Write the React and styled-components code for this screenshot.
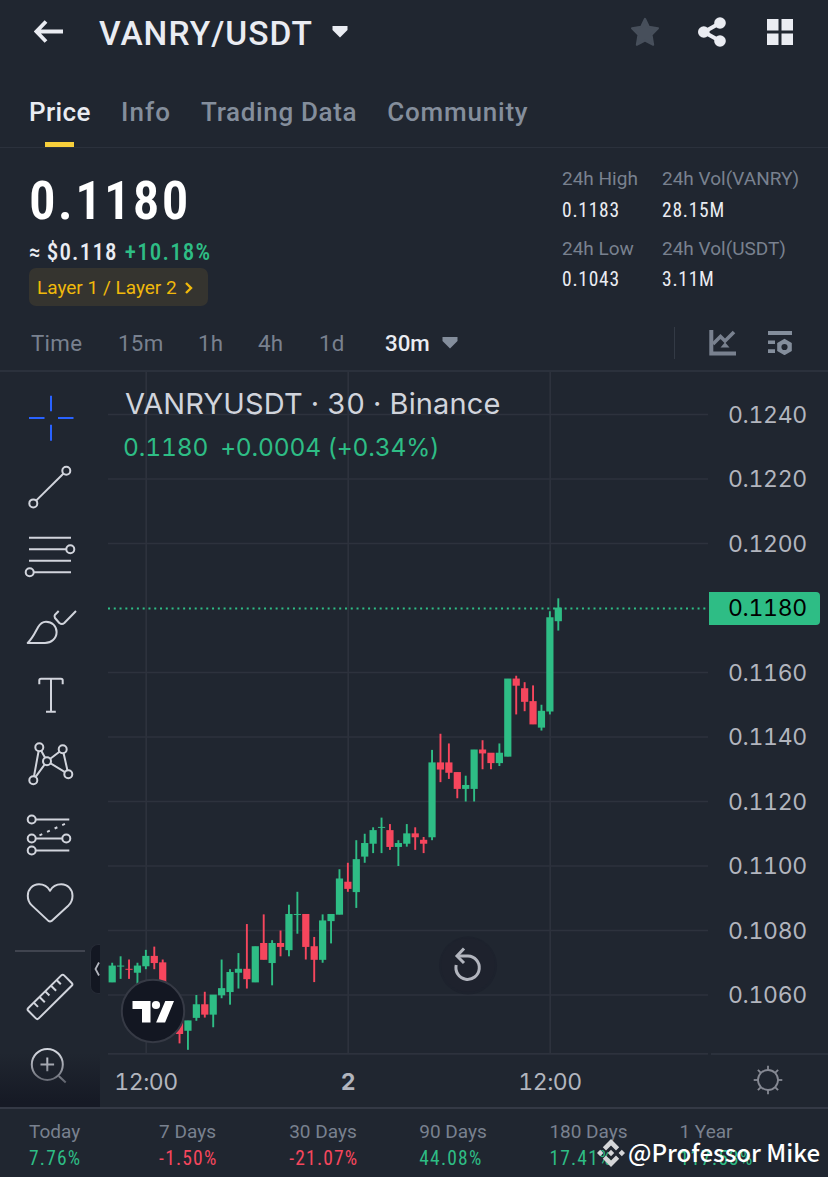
import React from "react";
import styled, { createGlobalStyle } from "styled-components";

const C = {
  bg: "#202630",
  line: "#2b313c",
  text: "#eaecf2",
  muted: "#848e9c",
  dim: "#79818f",
  green: "#2ebd85",
  red: "#f6465d",
  icon: "#d1d4dc",
};

const Global = createGlobalStyle`
  * { box-sizing: border-box; }
  body { margin: 0; background: ${C.bg}; }
`;

const Page = styled.div`
  position: relative;
  width: 828px;
  height: 1177px;
  overflow: hidden;
  display: flex;
  flex-direction: column;
  background: ${C.bg};
  color: ${C.text};
  font-family: Roboto, "Liberation Sans", sans-serif;
  white-space: nowrap;
  svg { display: block; flex: none; }
`;

const Header = styled.header`
  height: 76px;
  padding: 0 35px 12px 34px;
  display: flex;
  align-items: center;
`;
const Pair = styled.h1`
  margin: 3px 19px 0 36px;
  font-size: 33.5px;
  line-height: 40px;
  font-weight: 500;
  letter-spacing: 1px;
`;
const HeaderActions = styled.div`
  margin-left: auto;
  display: flex;
  align-items: center;
  gap: 38px;
  svg:last-child { margin-left: 3px; }
`;

const Tabs = styled.nav`
  height: 72px;
  padding: 0 29px;
  display: flex;
  gap: 30px;
  border-bottom: 1px solid ${C.line};
`;
const Tab = styled.div`
  display: flex;
  flex-direction: column;
  align-items: center;
  justify-content: space-between;
  padding-top: 20px;
  font-size: 26px;
  line-height: 32px;
  font-weight: 500;
  letter-spacing: ${(p) => p.$ls || 0}px;
  color: ${(p) => (p.$active ? C.text : C.muted)};
  &::after {
    content: "";
    width: 29px;
    height: 5px;
    background: ${(p) => (p.$active ? "#f7cf3b" : "transparent")};
  }
`;

const Summary = styled.section`
  height: 167px;
  padding: 0 29px;
  display: flex;
  justify-content: space-between;
`;
const PriceBlock = styled.div`
  display: flex;
  flex-direction: column;
  align-items: flex-start;
  padding-top: 22px;
`;
const Price = styled.div`
  font-size: 53px;
  line-height: 62px;
  font-weight: 600;
  font-stretch: 86%;
  letter-spacing: 2.2px;
  color: #fff;
`;
const Equivalent = styled.div`
  margin-top: 7px;
  font-size: 23px;
  line-height: 28px;
  font-weight: 500;
  font-stretch: 85%;
  letter-spacing: 1.2px;
  word-spacing: -1.5px;
  span { color: ${C.green}; margin-left: 7px; }
`;
const Tag = styled.div`
  margin-top: 1px;
  width: 179px;
  height: 38px;
  padding: 1px 8px 0;
  border-radius: 7px;
  display: flex;
  align-items: center;
  gap: 8px;
  background: #35342f;
  color: #f0b90b;
  font-size: 19px;
`;
const Stats = styled.div`
  width: 237px;
  padding-top: 18px;
  display: grid;
  grid-template-columns: 100px 1fr;
  grid-auto-rows: 69.5px;
`;
const Stat = styled.div`
  font-size: 19px;
  line-height: 26px;
  color: ${C.dim};
  b {
    display: block;
    margin-top: 5.5px;
    font-size: 19.5px;
    font-weight: 400;
    font-stretch: 85%;
    letter-spacing: 0.75px;
    color: ${C.text};
  }
`;

const Intervals = styled.div`
  height: 57px;
  padding: 0 36px 0 31px;
  display: flex;
  align-items: center;
  border-bottom: 2px solid ${C.line};
`;
const Interval = styled.div`
  width: ${(p) => p.$w}px;
  padding-top: 1px;
  font-size: 22.3px;
  line-height: 27px;
  letter-spacing: ${(p) => (p.$active ? 0 : 0.3)}px;
  font-weight: ${(p) => (p.$active ? 500 : 400)};
  color: ${(p) => (p.$active ? C.text : C.dim)};
`;
const IntervalTools = styled.div`
  margin-left: auto;
  display: flex;
  align-items: center;
  gap: 32px;
  padding-left: 34px;
  height: 32px;
  border-left: 1px solid #333a45;
`;

const ChartArea = styled.section`
  height: 735px;
  display: flex;
`;
const Toolbar = styled.aside`
  position: relative;
  width: 100px;
  padding-top: 11.4px;
  display: flex;
  flex-direction: column;
  &::after {
    content: "";
    position: absolute;
    left: 0;
    right: 0;
    bottom: 0;
    height: 54px;
    background: linear-gradient(rgba(19, 23, 34, 0), #161a25 90%);
  }
`;
const ToolDivider = styled.div`
  margin: 11px 15px 10.6px 15px;
  height: 2px;
  background: #40444f;
`;
const CollapseHandle = styled.div`
  position: absolute;
  left: 90px;
  top: 572px;
  width: 10px;
  height: 50px;
  border-radius: 8px 0 0 8px;
  border: 1px solid #262b36;
  border-right: 0;
  background: #131722;
  display: flex;
  align-items: center;
  justify-content: flex-end;
`;
const ChartMain = styled.div`
  width: 728px;
  display: flex;
  flex-direction: column;
`;
const PlotRow = styled.div`
  height: 683px;
  display: flex;
`;
const Plot = styled.div`
  position: relative;
  width: 609px;
  height: 683px;
`;
const Legend = styled.div`
  position: absolute;
  left: 24px;
  top: 13px;
  font-family: Inter, sans-serif;
  font-variant-numeric: tabular-nums;
`;
const LegendTitle = styled.div`
  padding-left: 1px;
  font-size: 29px;
  line-height: 38px;
  color: #d1d4dc;
  letter-spacing: 0.15px;
`;
const LegendValues = styled.div`
  margin-top: 8px;
  margin-left: -1px;
  font-size: 24.5px;
  line-height: 32px;
  letter-spacing: -0.15px;
  color: ${C.green};
  span { margin-left: 12px; }
`;
const PriceScale = styled.div`
  width: 117px;
  margin-left: 2px;
  padding-top: 10.8px;
  border-bottom: 2px solid ${C.line};
  display: flex;
  flex-direction: column;
  font: 23px/33px Inter, sans-serif;
  font-variant-numeric: tabular-nums;
  letter-spacing: -0.3px;
  color: #b2b5be;
`;
const PriceMark = styled.div`
  height: 64.5px;
  margin-left: -2px;
  display: flex;
  align-items: center;
  span {
    width: 111px;
    padding-left: 19px;
    border-radius: 0 4px 4px 0;
    background: ${(p) => (p.$current ? C.green : "transparent")};
    color: ${(p) => (p.$current ? "#000" : "inherit")};
  }
`;
const TimeScale = styled.div`
  flex: 1;
  display: flex;
  align-items: center;
  gap: 126px;
  padding-left: 8px;
  font: 23px/30px Inter, sans-serif;
  font-variant-numeric: tabular-nums;
  letter-spacing: -0.5px;
  color: #b2b5be;
`;
const TimeMark = styled.div`
  width: 76px;
  padding-top: 2px;
  display: flex;
  justify-content: center;
  font-weight: ${(p) => (p.$bold ? 700 : 400)};
`;

const Returns = styled.footer`
  flex: 1;
  padding: 10px 0 0 29px;
  border-top: 2px solid #343945;
  display: grid;
  grid-template-columns: repeat(6, 130.1px);
`;
const Return = styled.div`
  font-size: 19px;
  line-height: 26px;
  color: ${C.dim};
  b {
    display: block;
    margin-top: 1px;
    font-size: 19.5px;
    font-weight: 400;
    font-stretch: 85%;
    letter-spacing: 1.2px;
    color: ${(p) => (p.$down ? C.red : C.green)};
  }
`;
const Author = styled.div`
  position: absolute;
  left: 597px;
  top: 1134px;
  height: 38px;
  display: flex;
  align-items: center;
  gap: 3px;
  color: #fff;
  font: 500 24.1px/36px "Noto Sans CJK SC", sans-serif;
  span { padding-bottom: 2px; }
`;

const BackIcon = () => (
  <svg width="29" height="24" viewBox="0 0 29 24" fill="none" stroke={C.text} strokeWidth="3.8">
    <path d="M12 1.5 2.5 11.5 12 21.5M2.5 11.5H29" />
  </svg>
);
const Caret = ({ color }) => (
  <svg width="16" height="12" viewBox="0 0 16 12" fill={color}>
    <path d="M.5 0h15v4L8 11.5.5 4z" />
  </svg>
);
const StarIcon = () => (
  <svg width="30" height="30" viewBox="0 0 30 30" fill="#474f5b" stroke="#474f5b" strokeWidth="2" strokeLinejoin="round">
    <path d="M15 1.8 18.8 9.8 28 11.2 21.6 17.8 23.2 27.8 15 23.6 6.8 27.8 8.4 17.8 2 11.2 11.2 9.8z" />
  </svg>
);
const ShareIcon = () => (
  <svg width="28" height="30" viewBox="0 0 28 30" fill={C.text}>
    <path d="M22 6 6 15l16 9" fill="none" stroke={C.text} strokeWidth="4" />
    <circle cx="22" cy="6" r="5.8" />
    <circle cx="5.8" cy="15" r="5.8" />
    <circle cx="22" cy="24" r="5.8" />
  </svg>
);
const GridIcon = () => (
  <svg width="26" height="26" viewBox="0 0 26 26" fill={C.text}>
    <path d="M0 0h11.5v11.5H0zM14.5 0H26v11.5H14.5zM0 14.5h11.5V26H0zM14.5 14.5H26V26H14.5z" />
  </svg>
);
const ChartTypeIcon = () => (
  <svg width="27" height="26" viewBox="0 0 27 26" fill="none" stroke={C.dim} strokeWidth="4">
    <path d="M2.3 0v23.5H27" />
    <path d="M4 14 11.5 6.5 16 11 25 2" strokeWidth="3.6" />
    <path d="M16 12.2 20.5 17.5h-9z" fill={C.dim} stroke="none" />
  </svg>
);
const ChartSettingsIcon = () => (
  <svg width="24" height="24" viewBox="0 0 24 24" fill={C.muted}>
    <path d="M0 0h24v4H0zM0 9.4h7v3.7H0zM0 18.2h7v3.7H0z" />
    <path fillRule="evenodd" d="M16.5 7.8 23.8 12v8L16.5 24.2 9.2 20v-8zM16.5 12.9a3.1 3.1 0 1 0 0 6.2 3.1 3.1 0 0 0 0-6.2z" />
  </svg>
);

const ToolSvg = ({ children, h = 69.4 }) => (
  <svg
    width="100"
    height={h}
    viewBox={`-50 ${-h / 2} 100 ${h}`}
    fill="none"
    stroke={C.icon}
    strokeWidth="2"
    strokeLinejoin="round"
  >
    {children}
  </svg>
);
const Node = ({ x, y }) => <circle cx={x} cy={y} r="4" fill={C.bg} />;

const Tools = () => (
  <>
    <ToolSvg>
      <path d="M1-22v15.5M1 7v16M-21 .3h15.5M8 .3h15.5" stroke="#2962ff" strokeWidth="2" />
    </ToolSvg>
    <ToolSvg>
      <path d="M-16.7 15.7 16.3-17" />
      <Node x={-16.7} y={15.7} />
      <Node x={16.3} y={-17} />
    </ToolSvg>
    <ToolSvg>
      <path d="M-21-19h42M-21-7.4h42M-21 4h42M-21 15.6h42" />
      <Node x={20.3} y={-7.4} />
      <Node x={-20.3} y={15.6} />
    </ToolSvg>
    <ToolSvg>
      <path d="M-22.3 16.3C-17 11-14.5 5-12 .5-9.5-3.8-6.5-5-4-5 2-5 6.6-.6 6.6 5.4 6.6 12 1 16.3-5 16.3z" />
      <path d="M26-15.7 14.3-3.7Q12-1.7 9.3-3.7L5-8.7Q4-10.7 5-12L8.7-15.7" />
    </ToolSvg>
    <ToolSvg>
      <path d="M-10.7-11.4V-15.4Q-10.7-17-9-17H11Q12.7-17 12.7-15.4V-11.4M1-17V16M-4 16H5.8" />
    </ToolSvg>
    <ToolSvg>
      <path d="M-16.7 15.5-10.7-17.5-3-3.5 12.7-15.5 18.3 9.5-3-3.5z" />
      <Node x={-10.7} y={-17.5} />
      <Node x={12.7} y={-15.5} />
      <Node x={-3} y={-3.5} />
      <Node x={18.3} y={9.5} />
      <Node x={-16.7} y={15.5} />
    </ToolSvg>
    <ToolSvg>
      <path d="M-18.3-15.2H19.3M-18.3 3.8H16.3M-18.3 15.8H19.3" />
      <path d="M-10.5.6 17-11.8" strokeDasharray="3 5.3" />
      <Node x={-18.3} y={-15.2} />
      <Node x={-18.3} y={3.8} />
      <Node x={16.3} y={3.8} />
      <Node x={-18.3} y={15.8} />
    </ToolSvg>
    <ToolSvg>
      <path d="M0-12.9C-2.5-17.3-7-19.4-11-19.4-17.5-19.4-22.2-14.3-22.2-8-22.2-3.8-20.8-.8-18.2 1.7L-1.6 17.2Q0 18.2 1.6 17.2L18.5 1.7C21.1-.8 22.5-3.8 22.5-8 22.5-14.3 17.8-19.4 11.2-19.4 7-19.4 2.5-17.3 0-12.9z" />
    </ToolSvg>
    <ToolDivider />
    <ToolSvg>
      <path d="M11.3-21.3Q12.7-22.7 14.1-21.3L21.7-13.7Q23.1-12.3 21.7-10.9L-11.3 21.7Q-12.7 23.1-14.1 21.7L-21.7 14.1Q-23.1 12.7-21.7 11.3z" />
      <path d="M-16 6.2l4 4M-10.2.5l5 5M-4.6-5.2l4 4M1.1-10.9l5 5M6.8-16.5l4 4" />
    </ToolSvg>
    <ToolSvg>
      <circle cx="-2.7" cy="-2.3" r="15.5" />
      <path d="M-9.5-2.3H4.1M-2.7-9.1V4.5M8.7 9.2 15.7 15.7" />
    </ToolSvg>
  </>
);

// [up, high, body top, body bottom, low], prices in units of 0.0001
const CANDLES = [
  [1, 1070, 1069, 1064, 1064], [1, 1072, 1069, 1069, 1065], [0, 1071, 1068, 1068, 1065],
  [1, 1070, 1069, 1067, 1063], [1, 1074, 1072, 1069, 1068], [0, 1075, 1072, 1070, 1068],
  [0, 1071, 1070, 1062, 1061], [0, 1061, 1060, 1051, 1050], [0, 1053, 1052, 1048, 1045],
  [1, 1052, 1052, 1049, 1043], [1, 1060, 1057, 1053, 1052], [0, 1061, 1057, 1054, 1053],
  [1, 1060, 1060, 1054, 1050], [1, 1071, 1062, 1060, 1059], [1, 1068, 1067, 1061, 1057],
  [1, 1073, 1068, 1067, 1062], [0, 1082, 1068, 1065, 1062], [1, 1075, 1075, 1064, 1064],
  [0, 1085, 1076, 1071, 1071], [1, 1077, 1076, 1070, 1063], [0, 1080, 1076, 1075, 1072],
  [1, 1088, 1085, 1074, 1072], [1, 1092, 1085, 1085, 1079], [0, 1085, 1085, 1075, 1071],
  [0, 1078, 1075, 1071, 1064], [1, 1085, 1083, 1071, 1070], [1, 1085, 1085, 1083, 1076],
  [1, 1099, 1096, 1085, 1085], [0, 1101, 1095, 1093, 1092], [1, 1108, 1102, 1092, 1087],
  [1, 1110, 1107, 1103, 1101], [1, 1112, 1111, 1107, 1104], [1, 1115, 1112, 1112, 1104],
  [0, 1113, 1111, 1106, 1105], [1, 1108, 1107, 1106, 1100], [1, 1113, 1110, 1107, 1106],
  [0, 1112, 1110, 1109, 1105], [0, 1109, 1108, 1107, 1104], [1, 1136, 1132, 1109, 1108],
  [0, 1141, 1132, 1130, 1126], [0, 1138, 1132, 1129, 1127], [0, 1129, 1129, 1124, 1121],
  [1, 1128, 1125, 1124, 1120], [1, 1136, 1136, 1124, 1120], [0, 1139, 1136, 1135, 1130],
  [0, 1135, 1135, 1132, 1130], [1, 1138, 1135, 1132, 1131], [1, 1158, 1158, 1134, 1134],
  [0, 1159, 1158, 1156, 1147], [0, 1157, 1155, 1151, 1148], [0, 1156, 1151, 1144, 1144],
  [1, 1150, 1148, 1143, 1142], [1, 1179, 1177, 1148, 1147], [1, 1183, 1180, 1176, 1173],
];
const priceY = (p) => 623 - (p - 1060) * 3.225;
const MARKS = [1240, 1220, 1200, 1180, 1160, 1140, 1120, 1100, 1080, 1060];

const Candle = ({ i, data: [up, high, top, bottom, low] }) => {
  const x = 12.2 + i * 8.417;
  const bodyTop = priceY(top) - 0.4;
  return (
    <g fill={up ? C.green : C.red}>
      <rect x={x - 0.95} y={priceY(high)} width="1.9" height={priceY(low) - priceY(high)} />
      <rect x={x - 3.6} y={bodyTop} width="7.2" height={Math.max(1, priceY(bottom) - bodyTop + 0.3)} />
    </g>
  );
};

const PlotCanvas = () => (
  <svg width="609" height="683" viewBox="0 0 609 683">
    <g stroke="#2d323d" strokeWidth="1.7">
      {[46.2, 248.2, 450.2].map((x) => (
        <path key={x} d={`M${x} 0V681`} />
      ))}
      {MARKS.filter((m) => m !== 1180).map((m) => (
        <path key={m} d={`M8 ${priceY(m)}H608`} />
      ))}
      <path d="M8 681.8H608" />
    </g>
    {CANDLES.map((c, i) => (
      <Candle key={i} i={i} data={c} />
    ))}
    <path d={`M8 ${priceY(1180) + 0.4}H608`} stroke={C.green} strokeWidth="2" strokeDasharray="2 3.78" />
    <circle cx="53" cy="639" r="31.2" fill="#131722" stroke="#363a45" strokeWidth="2" />
    <g fill="#fff">
      <path d="M32.5 629h18v21.5H42V637h-9.5zM65.3 629H74l-8.9 21.5h-9z" />
      <circle cx="56" cy="633" r="4.1" />
    </g>
    <circle cx="368" cy="593.5" r="29" fill="#1a1e29" opacity="0.5" />
    <circle cx="368" cy="593" r="27" fill="#1e222d" />
    <g fill="none" stroke="#b2b5be" strokeWidth="3">
      <path d="M358 584H368A11.7 11.7 0 1 1 356.2 593" />
      <path d="M364 576.5l-7 7.5 7 7" />
    </g>
  </svg>
);

const SunIcon = () => (
  <svg width="30" height="30" viewBox="-15 -15 30 30" fill="none" stroke="#868993" strokeWidth="1.8">
    <circle r="10" />
    {[0, 45, 90, 135, 180, 225, 270, 315].map((a) => (
      <path key={a} d="M0-10V-14.3" transform={`rotate(${a})`} />
    ))}
  </svg>
);
const AxisCorner = styled.div`
  align-self: stretch;
  flex: 1;
  margin-left: -105px;
  padding: 10px 0 0 144px;
`;

const BinanceIcon = () => (
  <svg width="28" height="28" viewBox="0 0 28 28" fill="#d5d6d8">
    <path d="M14 0 22.2 8.2 19 11.4 14 6.4 9 11.4 5.8 8.2zM14 28 5.8 19.8 9 16.6l5 5 5-5 3.2 3.2zM14 10.8 17.2 14 14 17.2 10.8 14zM3.2 10.8 6.4 14 3.2 17.2 0 14zM24.8 10.8 28 14l-3.2 3.2L21.6 14z" />
  </svg>
);

const RETURNS = [
  ["Today", "7.76%"],
  ["7 Days", "-1.50%"],
  ["30 Days", "-21.07%"],
  ["90 Days", "44.08%"],
  ["180 Days", "17.41%"],
  ["1 Year", "117.53%"],
];

export default function App() {
  return (
    <Page>
      <Global />
      <Header>
        <BackIcon />
        <Pair>VANRY/USDT</Pair>
        <Caret color={C.text} />
        <HeaderActions>
          <StarIcon />
          <ShareIcon />
          <GridIcon />
        </HeaderActions>
      </Header>
      <Tabs>
        <Tab $active $ls={0.4}>Price</Tab>
        <Tab $ls={1.1}>Info</Tab>
        <Tab $ls={0.65}>Trading Data</Tab>
        <Tab $ls={0.8}>Community</Tab>
      </Tabs>
      <Summary>
        <PriceBlock>
          <Price>0.1180</Price>
          <Equivalent>
            ≈ $0.118<span>+10.18%</span>
          </Equivalent>
          <Tag>
            Layer 1 / Layer 2
            <svg width="8" height="12" viewBox="0 0 8 12" fill="none" stroke="#f0b90b" strokeWidth="2.4">
              <path d="M1 1l5 5-5 5" />
            </svg>
          </Tag>
        </PriceBlock>
        <Stats>
          <Stat>24h High<b>0.1183</b></Stat>
          <Stat>24h Vol(VANRY)<b>28.15M</b></Stat>
          <Stat>24h Low<b>0.1043</b></Stat>
          <Stat>24h Vol(USDT)<b>3.11M</b></Stat>
        </Stats>
      </Summary>
      <Intervals>
        <Interval $w={87}>Time</Interval>
        <Interval $w={80}>15m</Interval>
        <Interval $w={60}>1h</Interval>
        <Interval $w={61}>4h</Interval>
        <Interval $w={66}>1d</Interval>
        <Interval $w={57} $active>30m</Interval>
        <Caret color={C.muted} />
        <IntervalTools>
          <ChartTypeIcon />
          <ChartSettingsIcon />
        </IntervalTools>
      </Intervals>
      <ChartArea>
        <Toolbar>
          <Tools />
          <CollapseHandle>
            <svg width="6" height="16" viewBox="0 0 6 16" fill="none" stroke="#b2b5be" strokeWidth="1.8">
              <path d="M5 1.5 1.5 8 5 14.5" />
            </svg>
          </CollapseHandle>
        </Toolbar>
        <ChartMain>
          <PlotRow>
            <Plot>
              <PlotCanvas />
              <Legend>
                <LegendTitle>VANRYUSDT · 30 · Binance</LegendTitle>
                <LegendValues>
                  0.1180<span>+0.0004 (+0.34%)</span>
                </LegendValues>
              </Legend>
            </Plot>
            <PriceScale>
              {MARKS.map((m) => (
                <PriceMark key={m} $current={m === 1180}>
                  <span>0.{m}</span>
                </PriceMark>
              ))}
            </PriceScale>
          </PlotRow>
          <TimeScale>
            <TimeMark>12:00</TimeMark>
            <TimeMark $bold>2</TimeMark>
            <TimeMark>12:00</TimeMark>
            <AxisCorner>
              <SunIcon />
            </AxisCorner>
          </TimeScale>
        </ChartMain>
      </ChartArea>
      <Returns>
        {RETURNS.map(([label, value]) => (
          <Return key={label} $down={value.startsWith("-")}>
            {label}
            <b>{value}</b>
          </Return>
        ))}
      </Returns>
      <Author>
        <BinanceIcon />
        <span>@Professor Mike</span>
      </Author>
    </Page>
  );
}
